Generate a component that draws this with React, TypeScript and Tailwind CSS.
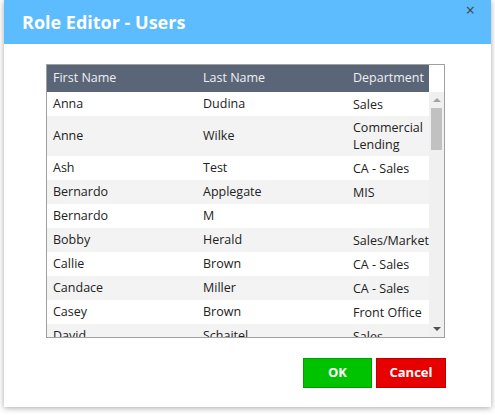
import React from "react";

type User = { first: string; last: string; dept: string };

const users: User[] = [
  { first: "Anna", last: "Dudina", dept: "Sales" },
  { first: "Anne", last: "Wilke", dept: "Commercial Lending" },
  { first: "Ash", last: "Test", dept: "CA - Sales" },
  { first: "Bernardo", last: "Applegate", dept: "MIS" },
  { first: "Bernardo", last: "M", dept: "" },
  { first: "Bobby", last: "Herald", dept: "Sales/Marketing" },
  { first: "Callie", last: "Brown", dept: "CA - Sales" },
  { first: "Candace", last: "Miller", dept: "CA - Sales" },
  { first: "Casey", last: "Brown", dept: "Front Office" },
  { first: "David", last: "Schaitel", dept: "Sales" },
];

function ScrollBar() {
  return (
    <div className="flex w-[16px] flex-col">
      <div className="h-[27px] bg-white" />
      <div className="flex flex-1 flex-col bg-[#f0f0f0]">
        <div className="flex h-[16px] items-center justify-center">
          <div className="h-0 w-0 border-x-[4px] border-b-[4px] border-x-transparent border-b-[#a3a3a3]" />
        </div>
        <div className="mx-[2px] h-[42px] bg-[#c1c1c1]" />
        <div className="flex-1" />
        <div className="flex h-[16px] items-center justify-center">
          <div className="h-0 w-0 border-x-[4px] border-t-[4px] border-x-transparent border-t-[#505050]" />
        </div>
      </div>
    </div>
  );
}

export default function App() {
  return (
    <div
      className="h-[415px] w-[495px] bg-white"
      style={{ fontFamily: "'Open Sans', 'Liberation Sans', sans-serif" }}
    >
      <div className="ml-[4px] flex h-[407px] w-[487px] flex-col bg-white shadow-[0_1px_6px_rgba(0,0,0,0.35)]">
        <div className="relative flex h-[44px] items-center bg-[#5cbcfe] pl-[18px]">
          <span className="text-[18px] font-bold text-white">Role Editor - Users</span>
          <span className="absolute right-[16px] top-[1px] text-[16px] leading-[18px] text-[#444]">
            ×
          </span>
        </div>

        <div className="ml-[42px] mt-[20px] flex h-[274px] w-[399px] overflow-hidden border border-[#a0a0a0] text-[12.5px] text-[#222]">
          <div className="flex w-[382px] flex-col">
            <div className="flex h-[27px] shrink-0 items-center bg-[#5a6577] text-[#eef0f3]">
              <div className="w-[150px] pl-[6px]">First Name</div>
              <div className="w-[150px] pl-[6px]">Last Name</div>
              <div className="w-[82px] pl-[6px]">Department</div>
            </div>
            {users.map((u, i) => (
              <div
                key={i}
                className={
                  "flex min-h-[24px] shrink-0 items-center " +
                  (i % 2 === 1 ? "bg-[#f3f3f3]" : "bg-white")
                }
              >
                <div className="w-[150px] pl-[6px]">{u.first}</div>
                <div className="w-[150px] pl-[6px]">{u.last}</div>
                <div className="w-[82px] overflow-hidden py-[3px] pl-[6px] leading-[17px]">
                  {u.dept === "Sales/Marketing" ? (
                    <span className="whitespace-nowrap">{u.dept}</span>
                  ) : (
                    u.dept || "\u00a0"
                  )}
                </div>
              </div>
            ))}
          </div>
          <ScrollBar />
        </div>

        <div className="mr-[45px] mt-[20px] flex justify-end gap-[4px]">
          <button className="h-[30px] w-[69px] border border-[#00a000] bg-[#00c300] text-[13px] font-bold text-white">
            OK
          </button>
          <button className="h-[30px] w-[70px] border border-[#c00000] bg-[#e60000] text-[13px] font-bold text-white">
            Cancel
          </button>
        </div>
      </div>
    </div>
  );
}
